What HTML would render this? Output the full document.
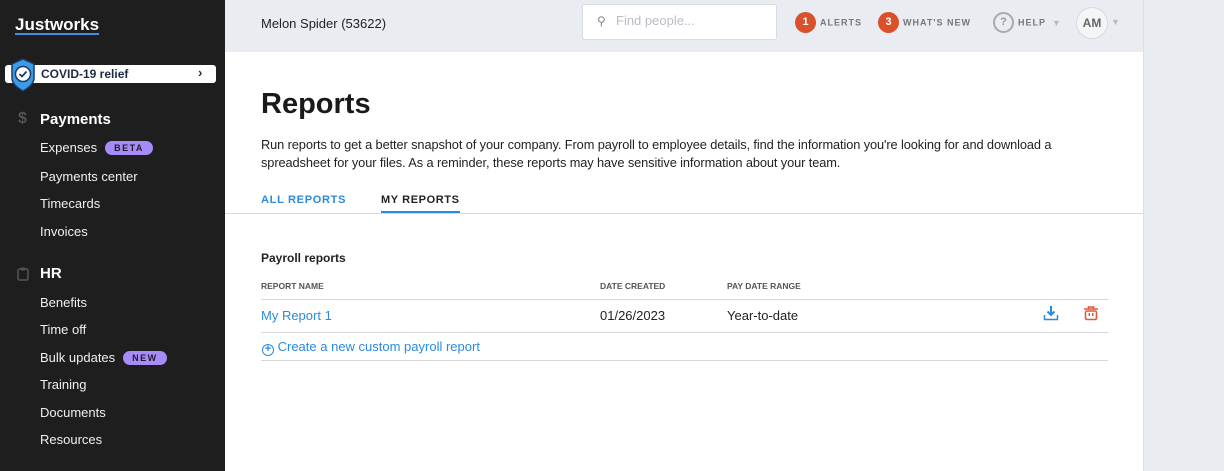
<!DOCTYPE html>
<html><head><style>
*{margin:0;padding:0;box-sizing:border-box}
body{width:1224px;height:471px;overflow:hidden;background:#fff;font-family:"Liberation Sans",sans-serif;position:relative}
.sb{position:absolute;left:0;top:0;width:225px;height:471px;background:#1e1e1e;color:#fff}
.abs{position:absolute;white-space:nowrap}
.item{position:absolute;left:40px;font-size:13px;color:#f0f0f0}
.head{position:absolute;left:40px;font-size:15px;font-weight:bold;color:#fff}
.pill{display:inline-block;background:#a78bfa;color:#1e1e1e;font-size:9px;font-weight:bold;letter-spacing:1.5px;border-radius:9px;padding:2px 9px;margin-left:8px;vertical-align:1px}
.top{position:absolute;left:225px;top:0;width:1000px;height:52px;background:#e9ecf1}
.right{position:absolute;left:1143px;top:0;width:81px;height:471px;background:#e9ecf1;border-left:1px solid #dde}
.badge{display:inline-block;width:21px;height:21px;border-radius:50%;background:#d9502b;color:#fff;font-size:11px;font-weight:bold;text-align:center;line-height:21px;vertical-align:middle;margin-right:4px}
.tl{font-size:9px;font-weight:bold;color:#777;letter-spacing:1px;vertical-align:middle}
.th{font-size:8.5px;font-weight:bold;color:#555;letter-spacing:0}
</style></head><body>
<div class="sb">
 <div class="abs" style="left:15px;top:16px;font-size:17px;font-weight:bold;border-bottom:2px solid #3b8fe6;line-height:17px">Justworks</div>
 <div class="abs" style="left:5px;top:65px;width:211px;height:18px;background:#fff;border-radius:3px"></div>
 <svg class="abs" style="left:10px;top:58px" width="26" height="34" viewBox="0 0 26 34"><path d="M13 1 L24 6 V20 Q24 27 13 33 Q2 27 2 20 V6 Z" fill="#3b9be6" stroke="#1a3a6a" stroke-width="1.5"/><circle cx="13" cy="16" r="7.5" fill="#fff" stroke="#1a3a6a" stroke-width="1.5"/><path d="M9.5 16 L12 18.5 L16.5 13.5" fill="none" stroke="#1a3a6a" stroke-width="1.8"/></svg>
 <div class="abs" style="left:41px;top:67px;font-size:12px;font-weight:bold;color:#1e2a44">COVID-19 relief</div>
 <div class="abs" style="left:198px;top:65px;font-size:13px;font-weight:bold;color:#1e2a44">›</div>
 <div class="abs" style="left:18px;top:110px;font-size:16px;color:#555;font-weight:bold">$</div>
 <div class="head" style="top:111px">Payments</div>
 <div class="item" style="top:140px">Expenses<span class="pill">BETA</span></div>
 <div class="item" style="top:169px">Payments center</div>
 <div class="item" style="top:196px">Timecards</div>
 <div class="item" style="top:224px">Invoices</div>
 <svg class="abs" style="left:17px;top:267px" width="12" height="14" viewBox="0 0 12 14"><rect x="1" y="2" width="10" height="11" rx="1.5" fill="none" stroke="#555" stroke-width="1.5"/><rect x="4" y="0.5" width="4" height="3" fill="#555"/></svg>
 <div class="head" style="top:265px">HR</div>
 <div class="item" style="top:295px">Benefits</div>
 <div class="item" style="top:322px">Time off</div>
 <div class="item" style="top:350px">Bulk updates<span class="pill">NEW</span></div>
 <div class="item" style="top:377px">Training</div>
 <div class="item" style="top:405px">Documents</div>
 <div class="item" style="top:432px">Resources</div>
</div>
<div class="top">
 <div class="abs" style="left:36px;top:16px;font-size:13px;color:#222">Melon Spider (53622)</div>
 <div class="abs" style="left:357px;top:4px;width:195px;height:36px;background:#fff;border:1px solid #d8dbe0;border-radius:3px"></div>
 <div class="abs" style="left:372px;top:14px;font-size:12px;color:#888">⚲</div>
 <div class="abs" style="left:391px;top:13px;font-size:13px;color:#b8bcc4">Find people...</div>
 <div class="abs" style="left:570px;top:12px"><span class="badge">1</span><span class="tl">ALERTS</span></div>
 <div class="abs" style="left:653px;top:12px"><span class="badge">3</span><span class="tl">WHAT'S NEW</span></div>
 <div class="abs" style="left:768px;top:12px"><span class="badge" style="background:none;border:2px solid #aaa;color:#999;line-height:17px">?</span><span class="tl">HELP</span><span style="color:#bbb;font-size:9px;margin-left:6px;vertical-align:middle">▼</span></div>
 <div class="abs" style="left:851px;top:7px;width:32px;height:32px;border-radius:50%;background:#f4f5f7;border:1px solid #d6d8dc;font-size:12px;font-weight:bold;color:#666;text-align:center;line-height:30px">AM</div>
 <div class="abs" style="left:886px;top:17px;color:#bbb;font-size:9px">▼</div>
</div>
<div class="right"></div>
<div class="abs" style="left:261px;top:88px;font-size:29px;font-weight:bold;color:#1a1a1a">Reports</div>
<div class="abs" style="left:261px;top:136px;font-size:12.8px;line-height:18px;color:#222;white-space:normal;width:830px;letter-spacing:-0.1px">Run reports to get a better snapshot of your company. From payroll to employee details, find the information you're looking for and download a spreadsheet for your files. As a reminder, these reports may have sensitive information about your team.</div>
<div class="abs" style="left:261px;top:194px;font-size:11px;font-weight:bold;color:#2a8ae0;letter-spacing:0.7px">ALL REPORTS</div>
<div class="abs" style="left:381px;top:194px;font-size:11px;font-weight:bold;color:#222;letter-spacing:0.6px;border-bottom:2px solid #2a8ae0;padding-bottom:5px">MY REPORTS</div>
<div class="abs" style="left:225px;top:213px;width:918px;height:1px;background:#d8d8d8"></div>
<div class="abs" style="left:261px;top:251px;font-size:12px;font-weight:bold;color:#222">Payroll reports</div>
<div class="abs th" style="left:261px;top:281px">REPORT NAME</div>
<div class="abs th" style="left:600px;top:281px">DATE CREATED</div>
<div class="abs th" style="left:727px;top:281px">PAY DATE RANGE</div>
<div class="abs" style="left:261px;top:299px;width:847px;height:1px;background:#d8d8d8"></div>
<div class="abs" style="left:261px;top:308px;font-size:13px;color:#2a8ae0">My Report 1</div>
<div class="abs" style="left:600px;top:308px;font-size:13px;color:#222">01/26/2023</div>
<div class="abs" style="left:727px;top:308px;font-size:13px;color:#222">Year-to-date</div>
<svg class="abs" style="left:1043px;top:305px" width="16" height="16" viewBox="0 0 16 16"><path d="M8 1 V10 M4.5 6.5 L8 10 L11.5 6.5" stroke="#2a8ae0" stroke-width="2" fill="none"/><path d="M1.5 10 V14.5 H14.5 V10" stroke="#2a8ae0" stroke-width="1.5" fill="none"/></svg>
<svg class="abs" style="left:1083px;top:305px" width="16" height="16" viewBox="0 0 16 16"><path d="M1 4 H15 M5.5 4 V2 H10.5 V4" stroke="#e05a3a" stroke-width="1.6" fill="none"/><rect x="2.5" y="6" width="11" height="8.5" rx="1.5" fill="none" stroke="#e05a3a" stroke-width="1.6"/><rect x="5.5" y="8" width="1.5" height="3" fill="#e05a3a"/><rect x="9" y="8" width="1.5" height="3" fill="#e05a3a"/></svg>
<div class="abs" style="left:261px;top:332px;width:847px;height:1px;background:#d8d8d8"></div>
<div class="abs" style="left:262px;top:339px;font-size:13px;color:#2a8ae0"><span style="display:inline-block;width:12px;height:12px;border:1.5px solid #2a8ae0;border-radius:50%;font-size:11px;line-height:9px;text-align:center;font-weight:bold;vertical-align:-1px">+</span> Create a new custom payroll report</div>
<div class="abs" style="left:261px;top:360px;width:847px;height:1px;background:#d8d8d8"></div>
</body></html>
